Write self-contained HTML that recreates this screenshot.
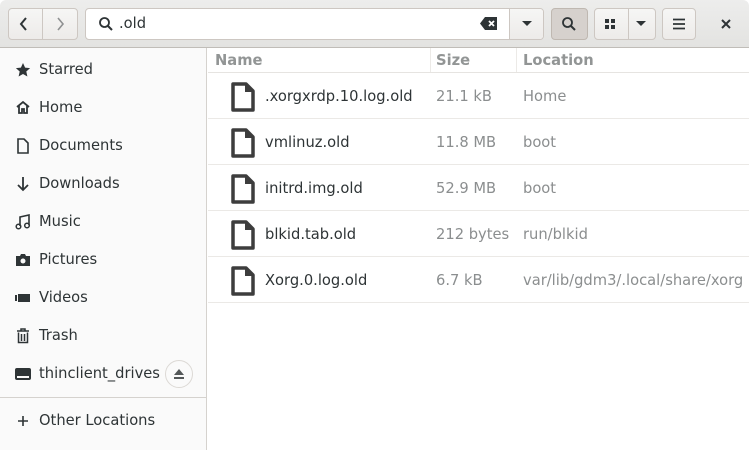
<!DOCTYPE html>
<html><head><style>
*{box-sizing:border-box;margin:0;padding:0}
body{width:749px;height:450px;overflow:hidden;font-family:"DejaVu Sans","Liberation Sans",sans-serif;font-size:14.7px;color:#2e3436;background:#fff;position:relative}
.hb{position:absolute;left:0;top:0;width:749px;height:48px;background:linear-gradient(#ededec,#e3e3e1);border-bottom:1px solid #c0bdb8;border-radius:6px 6px 0 0}
.btn{position:absolute;top:8px;height:32px;background:linear-gradient(#f6f6f5,#edebe9);border:1px solid #cdc7c2;border-radius:4px}
.ab{position:absolute}
.sb{position:absolute;left:0;top:48px;width:207px;height:402px;background:#fafafa;border-right:1px solid #d5d2ce}
.it{position:absolute;left:39px;font-size:14.7px;color:#2e3436}
.ic{position:absolute;left:15px}
.ct{position:absolute;left:208px;top:48px;right:0;bottom:0;background:#fff}
.hd{position:absolute;top:0;height:25px;border-bottom:1px solid #e6e4e1;left:0;right:0}
.hd span{position:absolute;top:4px;font-weight:bold;color:#929595;font-size:14.7px}
.row{position:absolute;left:0;right:0;height:46px;border-bottom:1px solid #ebe9e6}
.row .n{position:absolute;left:57px;top:15px}
.row .s{position:absolute;left:228px;top:15px;color:#8b8e8f}
.row .l{position:absolute;left:315px;top:15px;color:#8b8e8f}
.row svg{position:absolute;left:23px;top:9px}
</style></head><body>
<div class="hb">
 <div class="btn" style="left:8px;width:70px"></div>
 <div class="ab" style="left:42px;top:9px;width:1px;height:30px;background:#cdc7c2"></div>
 <svg class="ab" style="left:19px;top:17px" width="10" height="14"><path d="M7 1L2 7l5 6" stroke="#2e3436" stroke-width="2" fill="none"/></svg>
 <svg class="ab" style="left:55px;top:17px" width="10" height="14"><path d="M3 1l5 6-5 6" stroke="#8f9192" stroke-width="1.6" fill="none"/></svg>
 <div class="ab" style="left:85px;top:8px;width:459px;height:32px;background:#fff;border:1px solid #cdc7c2;border-radius:4px"></div>
 <div class="ab" style="left:509px;top:9px;width:34px;height:30px;background:linear-gradient(#f6f6f5,#edebe9);border-left:1px solid #cdc7c2;border-radius:0 3px 3px 0"></div>
 <svg class="ab" style="left:98px;top:16px" width="16" height="16"><circle cx="6.5" cy="6.5" r="4.5" stroke="#2e3436" stroke-width="1.8" fill="none"/><path d="M10 10l4 4" stroke="#2e3436" stroke-width="2"/></svg>
 <div class="ab" style="left:119px;top:15px;font-size:14.7px">.old</div>
 <svg class="ab" style="left:480px;top:17px" width="17" height="13"><path d="M5 0h12v13H5L0 6.5z" fill="#2e3436"/><path d="M9 4l5 5M14 4l-5 5" stroke="#fff" stroke-width="1.8"/></svg>
 <svg class="ab" style="left:522px;top:21px" width="10" height="6"><path d="M0 0h10L5 5z" fill="#2e3436"/></svg>
 <div class="btn" style="left:551px;width:37px;background:#d6d1cd;border-color:#bfb8b1"></div>
 <svg class="ab" style="left:561px;top:16px" width="16" height="16"><circle cx="6.5" cy="6.5" r="4.5" stroke="#2e3436" stroke-width="1.8" fill="none"/><path d="M10 10l4 4" stroke="#2e3436" stroke-width="2"/></svg>
 <div class="btn" style="left:594px;width:62px"></div>
 <div class="ab" style="left:628px;top:9px;width:1px;height:30px;background:#cdc7c2"></div>
 <svg class="ab" style="left:605px;top:19px" width="10" height="10"><rect x="0" y="0" width="4" height="4" fill="#2e3436"/><rect x="6" y="0" width="4" height="4" fill="#2e3436"/><rect x="0" y="6" width="4" height="4" fill="#2e3436"/><rect x="6" y="6" width="4" height="4" fill="#2e3436"/></svg>
 <svg class="ab" style="left:636px;top:21px" width="10" height="6"><path d="M0 0h10L5 5z" fill="#2e3436"/></svg>
 <div class="btn" style="left:662px;width:34px"></div>
 <svg class="ab" style="left:673px;top:18px" width="12" height="12"><path d="M0 1.5h12M0 6h12M0 10.5h12" stroke="#2e3436" stroke-width="1.8"/></svg>
 <svg class="ab" style="left:721px;top:19px" width="10" height="10"><path d="M1 1l8 8M9 1l-8 8" stroke="#2e3436" stroke-width="2"/></svg>
</div>
<div class="sb">
 <svg class="ic" style="top:14px" width="16" height="16"><path d="M8 1l2.1 4.6 5 .5-3.8 3.4 1.1 5L8 12l-4.4 2.5 1.1-5L.9 6.1l5-.5z" fill="#2e3436"/></svg>
 <div class="it" style="top:13px">Starred</div>
 <svg class="ic" style="top:52px" width="16" height="16"><path d="M2 7L8 2l6 5M4 6v7h3V9h2v4h3V6" stroke="#2e3436" stroke-width="1.8" fill="none"/></svg>
 <div class="it" style="top:51px">Home</div>
 <svg class="ic" style="top:90px" width="16" height="16"><path d="M3 1h6l4 4v10H3z" stroke="#2e3436" stroke-width="1.6" fill="none"/></svg>
 <div class="it" style="top:89px">Documents</div>
 <svg class="ic" style="top:128px" width="16" height="16"><path d="M8 1v13M3 9l5 5 5-5" stroke="#2e3436" stroke-width="1.8" fill="none"/></svg>
 <div class="it" style="top:127px">Downloads</div>
 <svg class="ic" style="top:166px" width="16" height="16"><path d="M5 12V3l9-2v10" stroke="#2e3436" stroke-width="1.6" fill="none"/><circle cx="3.5" cy="12.5" r="2.3" stroke="#2e3436" stroke-width="1.5" fill="none"/><circle cx="12" cy="11.5" r="2.3" stroke="#2e3436" stroke-width="1.5" fill="none"/></svg>
 <div class="it" style="top:165px">Music</div>
 <svg class="ic" style="top:204px" width="16" height="16"><path d="M1 4h4l1-2h4l1 2h4v10H1z" fill="#2e3436"/><circle cx="8" cy="9" r="2.5" fill="#fafafa"/></svg>
 <div class="it" style="top:203px">Pictures</div>
 <svg class="ic" style="top:242px" width="16" height="16"><path d="M0 5h2v6H0zM3 4h2v8H3z" fill="#2e3436"/><rect x="5" y="4" width="10" height="8" fill="#2e3436"/></svg>
 <div class="it" style="top:241px">Videos</div>
 <svg class="ic" style="top:280px" width="16" height="16"><path d="M2 3h12M6 3V1h4v2M3.5 4.5v10h9v-10M6.5 6v7M9.5 6v7" stroke="#2e3436" stroke-width="1.5" fill="none"/></svg>
 <div class="it" style="top:279px">Trash</div>
 <svg class="ic" style="top:318px" width="16" height="16"><rect x="0" y="2" width="16" height="12" rx="2" fill="#2e3436"/><rect x="2" y="10" width="12" height="2" fill="#fafafa"/></svg>
 <div class="it" style="top:317px">thinclient_drives</div>
 <div class="ab" style="left:165px;top:312px;width:28px;height:28px;border:1px solid #dcd9d5;border-radius:50%"></div>
 <svg class="ab" style="left:173px;top:320px" width="12" height="12"><path d="M6 1l5 6H1z" fill="#545859"/><rect x="1" y="9" width="10" height="2" fill="#545859"/></svg>
 <div class="ab" style="left:0;top:349px;width:207px;height:1px;background:#d5d2ce"></div>
 <svg class="ic" style="top:365px" width="16" height="16"><path d="M8 3v10M3 8h10" stroke="#2e3436" stroke-width="1.6"/></svg>
 <div class="it" style="top:364px">Other Locations</div>
</div>
<div class="ct">
 <div class="hd"><span style="left:7px">Name</span><span style="left:228px">Size</span><span style="left:315px">Location</span>
 <div class="ab" style="left:222px;top:0;width:1px;height:24px;background:#eceae7"></div>
 <div class="ab" style="left:308px;top:0;width:1px;height:24px;background:#eceae7"></div></div>
 <div class="row" style="top:25px"><svg width="24" height="30"><path d="M2 2h13l7 7v19H2z" stroke="#3d3d3d" stroke-width="3.5" fill="#fff" stroke-linejoin="round"/><path d="M14 2v8h8" fill="#3d3d3d"/></svg><span class="n">.xorgxrdp.10.log.old</span><span class="s">21.1 kB</span><span class="l">Home</span></div>
 <div class="row" style="top:71px"><svg width="24" height="30"><path d="M2 2h13l7 7v19H2z" stroke="#3d3d3d" stroke-width="3.5" fill="#fff" stroke-linejoin="round"/><path d="M14 2v8h8" fill="#3d3d3d"/></svg><span class="n">vmlinuz.old</span><span class="s">11.8 MB</span><span class="l">boot</span></div>
 <div class="row" style="top:117px"><svg width="24" height="30"><path d="M2 2h13l7 7v19H2z" stroke="#3d3d3d" stroke-width="3.5" fill="#fff" stroke-linejoin="round"/><path d="M14 2v8h8" fill="#3d3d3d"/></svg><span class="n">initrd.img.old</span><span class="s">52.9 MB</span><span class="l">boot</span></div>
 <div class="row" style="top:163px"><svg width="24" height="30"><path d="M2 2h13l7 7v19H2z" stroke="#3d3d3d" stroke-width="3.5" fill="#fff" stroke-linejoin="round"/><path d="M14 2v8h8" fill="#3d3d3d"/></svg><span class="n">blkid.tab.old</span><span class="s">212 bytes</span><span class="l">run/blkid</span></div>
 <div class="row" style="top:209px"><svg width="24" height="30"><path d="M2 2h13l7 7v19H2z" stroke="#3d3d3d" stroke-width="3.5" fill="#fff" stroke-linejoin="round"/><path d="M14 2v8h8" fill="#3d3d3d"/></svg><span class="n">Xorg.0.log.old</span><span class="s">6.7 kB</span><span class="l">var/lib/gdm3/.local/share/xorg</span></div>
</div>
</body></html>
